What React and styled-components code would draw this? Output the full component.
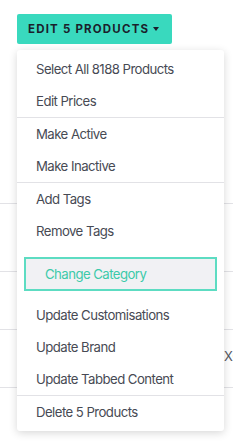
import React from 'react';
import styled, { createGlobalStyle } from 'styled-components';

const GlobalStyle = createGlobalStyle`
  html, body {
    margin: 0;
    padding: 0;
    background: #ffffff;
    font-family: Inter, "Liberation Sans", sans-serif;
    overflow: hidden;
  }
`;

//page holding the table behind the menu
const Page = styled.div`
  position: relative;
  width: 233px;
  height: 441px;
  overflow: hidden;
  background: #ffffff;
`;

const Toolbar = styled.div`
  padding: 14px 0 0 17px;
  height: 36px;
`;

const EditButton = styled.button`
  display: flex;
  align-items: center;
  gap: 4px;
  height: 30px;
  width: 155px;
  padding: 0 0 0 11px;
  border: none;
  border-radius: 2px;
  background: #39d9be;
  color: #1b1f2c;
  font-family: Inter, "Liberation Sans", sans-serif;
  font-weight: 700;
  font-size: 11.5px;
  letter-spacing: 1.2px;
  cursor: pointer;
`;

const Caret = styled.span`
  width: 0;
  height: 0;
  border-left: 3.5px solid transparent;
  border-right: 3.5px solid transparent;
  border-top: 4px solid #1b1f2c;
`;

// table rows behind the dropdown
const Table = styled.div`
  display: flex;
  flex-direction: column;
  padding-top: 89px;
`;

const Row = styled.div`
  height: ${p => p.h}px;
  border-bottom: 1px solid #e2e2e6;
  display: flex;
  align-items: center;
  padding: 0 0 6px 224px;
  box-sizing: border-box;
  color: #555862;
  font-size: 13px;
  white-space: nowrap;
`;

const Menu = styled.div`
  position: absolute;
  top: 50px;
  left: 17px;
  width: 207px;
  padding: 3px 0;
  background: #ffffff;
  border-radius: 3px;
  box-shadow: 0 2px 8px rgba(0, 0, 0, 0.16);
  display: flex;
  flex-direction: column;
`;

const Item = styled.div`
  height: 32px;
  display: flex;
  align-items: center;
  padding-left: 19px;
  color: #474a54;
  font-size: 13.2px;
  letter-spacing: -0.55px;
  white-space: nowrap;
`;

const ActiveItem = styled.div`
  height: 30px;
  margin: 10px 7px 8px 7px;
  border: 2px solid #5ddcc2;
  background: #f1f1f4;
  display: flex;
  align-items: center;
  padding-left: 19px;
  color: #3ccaa9;
  font-size: 13.2px;
  letter-spacing: -0.55px;
`;

const Divider = styled.div`
  height: 1px;
  background: #e2e2e6;
`;

const groups = [
  ['Select All 8188 Products', 'Edit Prices'],
  ['Make Active', 'Make Inactive'],
  ['Add Tags', 'Remove Tags', '*Change Category', 'Update Customisations', 'Update Brand', 'Update Tabbed Content'],
  ['Delete 5 Products'],
];

export default function App() {
  return (
    <Page>
      <GlobalStyle />
      <Toolbar>
        <EditButton>
          EDIT 5 PRODUCTS
          <Caret />
        </EditButton>
      </Toolbar>

      <Table>
        <Row h={65} />
        <Row h={68} />
        <Row h={58} />
        <Row h={58}>XC</Row>
      </Table>

      <Menu>
        {groups.map((g, i) => (
          <React.Fragment key={i}>
            {i > 0 && <Divider />}
            {g.map(label =>
              label.startsWith('*')
                ? <ActiveItem key={label}>{label.slice(1)}</ActiveItem>
                : <Item key={label}>{label}</Item>
            )}
          </React.Fragment>
        ))}
      </Menu>
    </Page>
  );
}
